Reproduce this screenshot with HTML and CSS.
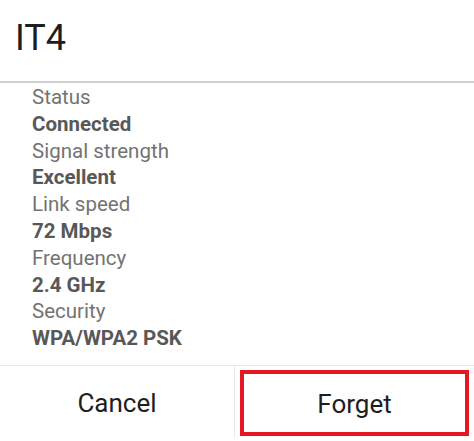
FILE: index.html
```html
<!DOCTYPE html>
<html lang="en">
<head>
<meta charset="utf-8">
<title>IT4</title>
<link rel="stylesheet" href="styles.css">
</head>
<body>
<div class="dialog">
  <header class="dialog-header">
    <h1 class="dialog-title">IT4</h1>
  </header>
  <dl class="details">
    <dt>Status</dt>
    <dd>Connected</dd>
    <dt>Signal strength</dt>
    <dd>Excellent</dd>
    <dt>Link speed</dt>
    <dd>72 Mbps</dd>
    <dt>Frequency</dt>
    <dd>2.4 GHz</dd>
    <dt>Security</dt>
    <dd>WPA/WPA2 PSK</dd>
  </dl>
  <div class="actions">
    <div class="action action-cancel"><span>Cancel</span></div>
    <div class="action action-forget"><span class="highlight">Forget</span></div>
  </div>
</div>
</body>
</html>
```

FILE: styles.css
```css
html, body {
  margin: 0;
  padding: 0;
  background: #ffffff;
}

body {
  font-family: Roboto, "Liberation Sans", sans-serif;
  width: 474px;
  height: 441px;
  overflow: hidden;
}

.dialog {
  display: flex;
  flex-direction: column;
  height: 441px;
}

.dialog-header {
  padding: 21px 0 25px 15px;
  border-bottom: 2px solid #cfcfcf;
}

.dialog-title {
  margin: 0;
  font-size: 36px;
  line-height: 35px;
  font-weight: 400;
  color: #1e1e1e;
}

.details {
  margin: 0;
  padding: 1px 0 13px 32px;
  font-size: 20.5px;
  line-height: 26.8px;
}

.details dt {
  color: #737373;
  font-weight: 400;
}

.details dd {
  margin: 0;
  color: #585858;
  font-weight: 700;
}

.actions {
  flex: 1;
  display: grid;
  grid-template-columns: 235px 1fr;
  border-top: 1px solid #e8e8e8;
}

.action {
  display: flex;
  align-items: stretch;
  font-size: 26px;
  color: #1e1e1e;
}

.action-cancel {
  border-right: 1px solid #e8e8e8;
  align-items: center;
  justify-content: center;
  margin-bottom: 3px;
  padding-top: 3px;
}

.action-forget {
  padding: 4px 5px 5px 5px;
}

.highlight {
  flex: 1;
  display: flex;
  align-items: center;
  justify-content: center;
  padding-top: 3px;
  border: 4px solid #e31822;
}
```
